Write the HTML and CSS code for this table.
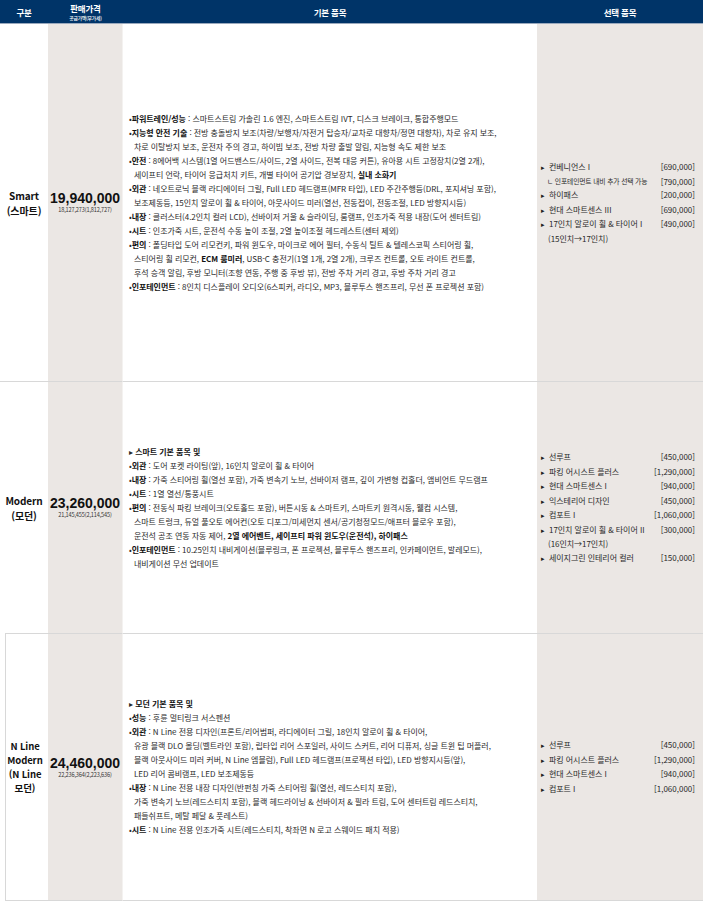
FILE: index.html
```html
<!DOCTYPE html>
<html lang="ko">
<head>
<meta charset="utf-8">
<title>가격표</title>
<link rel="stylesheet" href="styles.css">
</head>
<body>
<div class="table">
  <div class="th">구분</div>
  <div class="th th-price"><span class="th-main">판매가격</span><span class="th-sub">공급가액(부가세)</span></div>
  <div class="th">기본 품목</div>
  <div class="th">선택 품목</div>

  <div class="cell name">Smart<br>(스마트)</div>
  <div class="cell price"><strong>19,940,000</strong><span>18,127,273(1,812,727)</span></div>
  <div class="cell basic">
    <p class="ln">•<b>파워트레인/성능</b> : 스마트스트림 가솔린 1.6 엔진, 스마트스트림 IVT, 디스크 브레이크, 통합주행모드</p>
    <p class="ln">•<b>지능형 안전 기술</b> : 전방 충돌방지 보조(차량/보행자/자전거 탑승자/교차로 대향차/정면 대향차), 차로 유지 보조,</p>
    <p class="ln cont">차로 이탈방지 보조, 운전자 주의 경고, 하이빔 보조, 전방 차량 출발 알림, 지능형 속도 제한 보조</p>
    <p class="ln">•<b>안전</b> : 8에어백 시스템(1열 어드밴스드/사이드, 2열 사이드, 전복 대응 커튼), 유아용 시트 고정장치(2열 2개),</p>
    <p class="ln cont">세이프티 언락, 타이어 응급처치 키트, 개별 타이어 공기압 경보장치, <b>실내 소화기</b></p>
    <p class="ln">•<b>외관</b> : 네오트로닉 블랙 라디에이터 그릴, Full LED 헤드램프(MFR 타입), LED 주간주행등(DRL, 포지셔닝 포함),</p>
    <p class="ln cont">보조제동등, 15인치 알로이 휠 &amp; 타이어, 아웃사이드 미러(열선, 전동접이, 전동조절, LED 방향지시등)</p>
    <p class="ln">•<b>내장</b> : 클러스터(4.2인치 컬러 LCD), 선바이저 거울 &amp; 슬라이딩, 룸램프, 인조가죽 적용 내장(도어 센터트림)</p>
    <p class="ln">•<b>시트</b> : 인조가죽 시트, 운전석 수동 높이 조절, 2열 높이조절 헤드레스트(센터 제외)</p>
    <p class="ln">•<b>편의</b> : 폴딩타입 도어 리모컨키, 파워 윈도우, 마이크로 에어 필터, 수동식 틸트 &amp; 텔레스코픽 스티어링 휠,</p>
    <p class="ln cont">스티어링 휠 리모컨, <b>ECM 룸미러</b>, USB-C 충전기(1열 1개, 2열 2개), 크루즈 컨트롤, 오토 라이트 컨트롤,</p>
    <p class="ln cont">후석 승객 알림, 후방 모니터(조향 연동, 주행 중 후방 뷰), 전방 주차 거리 경고, 후방 주차 거리 경고</p>
    <p class="ln">•<b>인포테인먼트</b> : 8인치 디스플레이 오디오(6스피커, 라디오, MP3, 블루투스 핸즈프리, 무선 폰 프로젝션 포함)</p>
  </div>
  <div class="cell opts">
    <p class="opt"><span class="opt-name">컨베니언스 I</span><span class="opt-price">[690,000]</span></p>
    <p class="opt opt-sub"><span class="opt-name">ㄴ 인포테인먼트 내비 추가 선택 가능</span><span class="opt-price">[790,000]</span></p>
    <p class="opt"><span class="opt-name">하이패스</span><span class="opt-price">[200,000]</span></p>
    <p class="opt"><span class="opt-name">현대 스마트센스 III</span><span class="opt-price">[690,000]</span></p>
    <p class="opt"><span class="opt-name">17인치 알로이 휠 &amp; 타이어 I</span><span class="opt-price">[490,000]</span></p>
    <p class="opt opt-cont"><span class="opt-name">(15인치→17인치)</span></p>
  </div>

  <div class="cell name row-top">Modern<br>(모던)</div>
  <div class="cell price row-top"><strong>23,260,000</strong><span>21,145,455(2,114,545)</span></div>
  <div class="cell basic row-top">
    <p class="ln head">▸ <b>스마트 기본 품목 및</b></p>
    <p class="ln">•<b>외관</b> : 도어 포켓 라이팅(앞), 16인치 알로이 휠 &amp; 타이어</p>
    <p class="ln">•<b>내장</b> : 가죽 스티어링 휠(열선 포함), 가죽 변속기 노브, 선바이저 램프, 깊이 가변형 컵홀더, 앰비언트 무드램프</p>
    <p class="ln">•<b>시트</b> : 1열 열선/통풍시트</p>
    <p class="ln">•<b>편의</b> : 전동식 파킹 브레이크(오토홀드 포함), 버튼시동 &amp; 스마트키, 스마트키 원격시동, 웰컴 시스템,</p>
    <p class="ln cont">스마트 트렁크, 듀얼 풀오토 에어컨(오토 디포그/미세먼지 센서/공기청정모드/애프터 블로우 포함),</p>
    <p class="ln cont">운전석 공조 연동 자동 제어, <b>2열 에어벤트, 세이프티 파워 윈도우(운전석), 하이패스</b></p>
    <p class="ln">•<b>인포테인먼트</b> : 10.25인치 내비게이션(블루링크, 폰 프로젝션, 블루투스 핸즈프리, 인카페이먼트, 발레모드),</p>
    <p class="ln cont">내비게이션 무선 업데이트</p>
  </div>
  <div class="cell opts row-top">
    <p class="opt"><span class="opt-name">선루프</span><span class="opt-price">[450,000]</span></p>
    <p class="opt"><span class="opt-name">파킹 어시스트 플러스</span><span class="opt-price">[1,290,000]</span></p>
    <p class="opt"><span class="opt-name">현대 스마트센스 I</span><span class="opt-price">[940,000]</span></p>
    <p class="opt"><span class="opt-name">익스테리어 디자인</span><span class="opt-price">[450,000]</span></p>
    <p class="opt"><span class="opt-name">컴포트 I</span><span class="opt-price">[1,060,000]</span></p>
    <p class="opt"><span class="opt-name">17인치 알로이 휠 &amp; 타이어 II</span><span class="opt-price">[300,000]</span></p>
    <p class="opt opt-cont"><span class="opt-name">(16인치→17인치)</span></p>
    <p class="opt"><span class="opt-name">세이지그린 인테리어 컬러</span><span class="opt-price">[150,000]</span></p>
  </div>

  <div class="cell name row-top row-last name-boxed">N Line<br>Modern<br>(N Line<br>모던)</div>
  <div class="cell price row-top row-last"><strong>24,460,000</strong><span>22,236,364(2,223,636)</span></div>
  <div class="cell basic row-top row-last">
    <p class="ln head">▸ <b>모던 기본 품목 및</b></p>
    <p class="ln">•<b>성능</b> : 후륜 멀티링크 서스펜션</p>
    <p class="ln">•<b>외관</b> : N Line 전용 디자인(프론트/리어범퍼, 라디에이터 그릴, 18인치 알로이 휠 &amp; 타이어,</p>
    <p class="ln cont">유광 블랙 DLO 몰딩(벨트라인 포함), 립타입 리어 스포일러, 사이드 스커트, 리어 디퓨저, 싱글 트윈 팁 머플러,</p>
    <p class="ln cont">블랙 아웃사이드 미러 커버, N Line 엠블럼), Full LED 헤드램프(프로젝션 타입), LED 방향지시등(앞),</p>
    <p class="ln cont">LED 리어 콤비램프, LED 보조제동등</p>
    <p class="ln">•<b>내장</b> : N Line 전용 내장 디자인(반펀칭 가죽 스티어링 휠(열선, 레드스티치 포함),</p>
    <p class="ln cont">가죽 변속기 노브(레드스티치 포함), 블랙 헤드라이닝 &amp; 선바이저 &amp; 필라 트림, 도어 센터트림 레드스티치,</p>
    <p class="ln cont">패들쉬프트, 메탈 페달 &amp; 풋레스트)</p>
    <p class="ln">•<b>시트</b> : N Line 전용 인조가죽 시트(레드스티치, 착좌면 N 로고 스웨이드 패치 적용)</p>
  </div>
  <div class="cell opts row-top row-last">
    <p class="opt"><span class="opt-name">선루프</span><span class="opt-price">[450,000]</span></p>
    <p class="opt"><span class="opt-name">파킹 어시스트 플러스</span><span class="opt-price">[1,290,000]</span></p>
    <p class="opt"><span class="opt-name">현대 스마트센스 I</span><span class="opt-price">[940,000]</span></p>
    <p class="opt"><span class="opt-name">컴포트 I</span><span class="opt-price">[1,060,000]</span></p>
  </div>
</div>
</body>
</html>
```

FILE: styles.css
```css
* { box-sizing: border-box; }
html, body { margin: 0; padding: 0; background: #fff; }
body {
  font-family: "Noto Sans CJK KR", "Noto Sans", sans-serif;
  color: #222;
  width: 703px;
}
p { margin: 0; }

.table {
  display: grid;
  grid-template-columns: 48px 75px 414px 166px;
  grid-template-rows: 24px 357px 252px 268px;
}

.th {
  background: #003468;
  border-bottom: 1px solid #9aa9bd;
  color: #fff;
  font-weight: 700;
  font-size: 8.5px;
  letter-spacing: -0.2px;
  display: flex;
  align-items: center;
  justify-content: center;
}
.th-price {
  flex-direction: column;
}
.th-main {
  line-height: 12px;
}
.th-sub {
  font-size: 4.8px;
  line-height: 7px;
  font-weight: 500;
  letter-spacing: -0.2px;
}

.cell {
  display: flex;
  flex-direction: column;
  justify-content: center;
}
.row-top { border-top: 1px solid #d8d8d8; }
.row-last { border-bottom: 1px solid #d8d8d8; }

.name {
  align-items: center;
  text-align: center;
  font-weight: 700;
  font-size: 10px;
  line-height: 14.5px;
  color: #111;
  letter-spacing: -0.1px;
  padding-top: 2px;
}
.name-boxed {
  margin-left: 5px;
  border-left: 1px solid #d8d8d8;
  padding-right: 4px;
  font-size: 9.5px;
  line-height: 13.8px;
}

.price {
  background: #ebe7e4;
  align-items: center;
  border-right: 1px solid #f4f2f0;
}
.price strong {
  font-family: "Liberation Sans", Arial, sans-serif;
  font-weight: 700;
  font-size: 14px;
  line-height: 14px;
  color: #111;
}
.price span {
  font-size: 5.6px;
  line-height: 8px;
  letter-spacing: -0.15px;
  color: #333;
  margin-top: 1px;
}

.basic {
  padding-left: 6px;
  font-size: 8px;
  line-height: 14px;
  letter-spacing: -0.05px;
  color: #2a2a2a;
}
.basic b { font-weight: 700; color: #111; }
.ln { white-space: nowrap; }
.ln.cont { padding-left: 5px; }

.opts {
  background: #ebe7e4;
  padding: 0 8px 0 4px;
  font-size: 8px;
  line-height: 13.5px;
  letter-spacing: -0.05px;
  color: #2a2a2a;
}
.opt {
  display: flex;
  justify-content: space-between;
  white-space: nowrap;
}
.opt-name::before {
  content: "▸";
  display: inline-block;
  width: 8px;
  font-size: 7px;
  color: #222;
}
.opt-sub .opt-name {
  font-size: 6.8px;
  letter-spacing: -0.15px;
  padding-left: 6px;
}
.opt-sub .opt-name::before { content: none; }
.opt-cont .opt-name { padding-left: 7px; }
.opt-cont .opt-name::before { content: none; }
.opt-price { letter-spacing: 0; }
```
